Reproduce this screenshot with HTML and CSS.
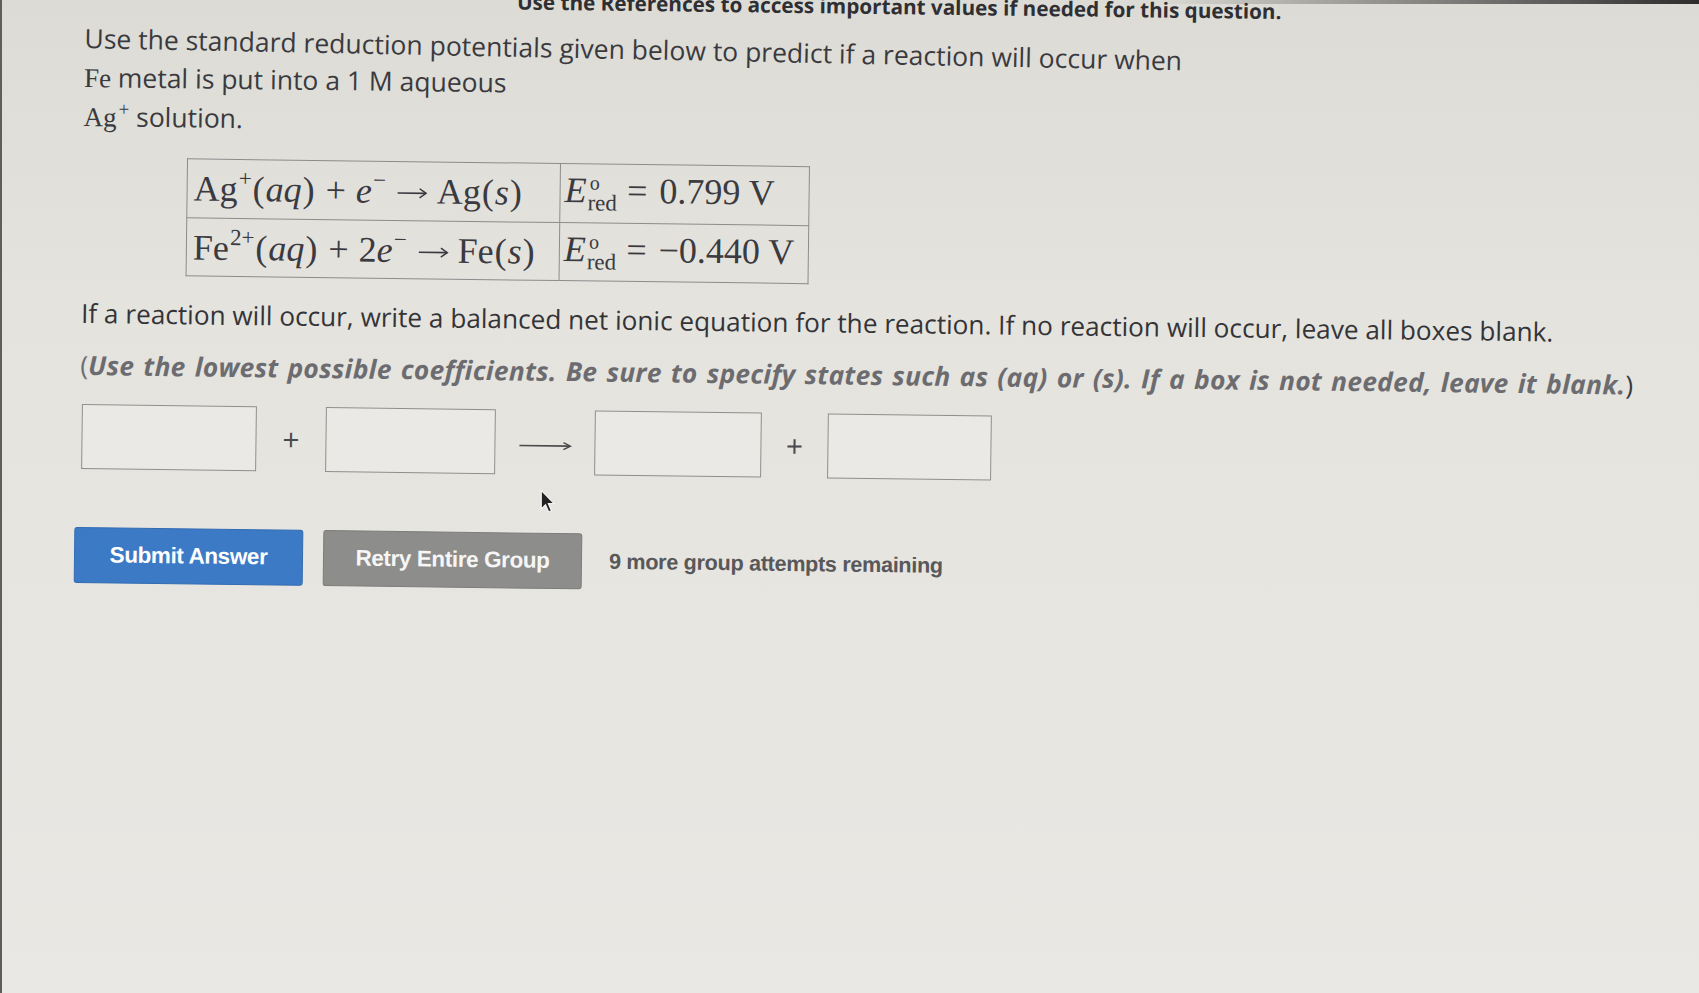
FILE: index.html
```html
<!DOCTYPE html>
<html lang="en">
<head>
<meta charset="utf-8">
<title>Standard reduction potentials</title>
<link rel="stylesheet" href="styles.css">
</head>
<body>
<div class="screen">
  <div class="refs">Use the References to access important values if needed for this question.</div>

  <div class="intro">
    <div class="line first">Use the standard reduction potentials given below to predict if a reaction will occur when</div>
    <div class="line"><span class="mj">Fe</span> metal is put into a 1 M aqueous</div>
    <div class="line"><span class="mj">Ag<sup>+</sup></span> solution.</div>
  </div>

  <table class="pot">
    <tr class="r1">
      <td class="c1">Ag<sup>+</sup><span class="pa">(</span><i>aq</i><span class="pa">)</span><span class="op">+</span><i>e</i><sup>−</sup><span class="op ar"><svg width="31" height="14" viewBox="0 0 31 14"><path d="M1 7 H29" stroke="#3a3a40" stroke-width="1.6" fill="none"/><path d="M23 2.5 L29.5 7 L23 11.5" stroke="#3a3a40" stroke-width="1.5" fill="none"/></svg></span>Ag<span class="pa">(</span><i>s</i><span class="pa">)</span></td>
      <td class="c2"><i>E</i><span class="ss"><span class="o">o</span><span class="r">red</span></span><span class="op eq">=</span>0.799 V</td>
    </tr>
    <tr class="r2">
      <td class="c1">Fe<sup>2+</sup><span class="pa">(</span><i>aq</i><span class="pa">)</span><span class="op">+</span>2<i>e</i><sup>−</sup><span class="op ar"><svg width="31" height="14" viewBox="0 0 31 14"><path d="M1 7 H29" stroke="#3a3a40" stroke-width="1.6" fill="none"/><path d="M23 2.5 L29.5 7 L23 11.5" stroke="#3a3a40" stroke-width="1.5" fill="none"/></svg></span>Fe<span class="pa">(</span><i>s</i><span class="pa">)</span></td>
      <td class="c2"><i>E</i><span class="ss"><span class="o">o</span><span class="r">red</span></span><span class="op eq">=</span>−0.440 V</td>
    </tr>
  </table>

  <p class="instr">If a reaction will occur, write a balanced net ionic equation for the reaction. If no reaction will occur, leave all boxes blank.</p>
  <p class="note"><span class="par">(</span><b><i>Use the lowest possible coefficients. Be sure to specify states such as (aq) or (s). If a box is not needed, leave it blank.</i></b><span class="par end">)</span></p>

  <div class="answer">
    <div class="box b1"></div>
    <div class="opw plus p1">+</div>
    <div class="box b2"></div>
    <div class="opw arrow">
      <svg width="54" height="14" viewBox="0 0 54 14"><path d="M1 7 H51" stroke="#4a4a4a" stroke-width="1.6" fill="none"/><path d="M45 3.5 L52 7 L45 10.5" stroke="#4a4a4a" stroke-width="1.4" fill="none"/></svg>
    </div>
    <div class="box b3"></div>
    <div class="opw plus p2">+</div>
    <div class="box b4"></div>
  </div>

  <div class="actions">
    <button class="btn submit">Submit Answer</button>
    <button class="btn retry">Retry Entire Group</button>
    <span class="remain">9 more group attempts remaining</span>
  </div>
</div>

<svg class="cursor" width="16" height="25" viewBox="0 0 13 20"><path d="M1 1 L1 16 L4.5 12.6 L7 18.5 L9.3 17.5 L6.8 11.7 L11.5 11.7 Z" fill="#222" stroke="#f4f4f4" stroke-width="1"/></svg>
</body>
</html>
```

FILE: styles.css
```css
html, body {
  margin: 0;
  padding: 0;
}
body {
  width: 1699px;
  height: 993px;
  overflow: hidden;
  position: relative;
  background-color: #e5e4df;
  background-image:
    linear-gradient(to right, rgba(35,35,35,0) 68%, rgba(35,35,35,0.95) 100%),
    linear-gradient(to bottom, #dcdbd5 0%, #e4e3de 30%, #e9e8e4 100%);
  background-size: 100% 4px, 100% 100%;
  background-repeat: no-repeat;
  border-left: 2px solid #5e5e5c;
  box-sizing: border-box;
  font-family: "Open Sans", "Noto Sans", sans-serif;
  color: #333;
}
.screen {
  padding-left: 83px;
  padding-top: 1px;
  transform: rotate(0.72deg);
  transform-origin: 0 0;
}
.refs {
  margin-top: -17px;
  padding-left: 432px;
  font-weight: 700;
  font-size: 20.7px;
  line-height: 22px;
  color: #2f2f33;
  white-space: nowrap;
}
.intro {
  margin-top: 12px;
  font-size: 26.5px;
  line-height: 39px;
  color: #3a3a3e;
}
.line { white-space: nowrap; }
.line.first {
  transform: rotate(0.45deg);
  transform-origin: 0 50%;
}
.mj {
  font-family: "Liberation Serif", "DejaVu Serif", serif;
  font-size: 27px;
  line-height: 1;
}
.mj sup {
  font-size: 19px;
  line-height: 0;
  vertical-align: 11px;
  margin-left: 2px;
}
.pot {
  margin-top: 21px;
  margin-left: 104px;
  border-collapse: collapse;
  font-family: "Liberation Serif", "DejaVu Serif", serif;
  font-size: 36px;
  line-height: 1;
  color: #3a3a40;
}
.pot td {
  border: 1.6px solid #8c8c8c;
  padding: 0 2px 0 6px;
  white-space: nowrap;
  vertical-align: middle;
}
.pot .r1 td { height: 58px; }
.pot .r2 td { height: 57px; }
.pot td.c1 { width: 364px; }
.pot td.c2 { width: 242px; padding-left: 4px; }
.pot sup {
  font-size: 23px;
  line-height: 0;
  vertical-align: 15px;
  margin-left: 1px;
}
.pa { margin: 0 1px; }
.op { margin: 0 10px; }
.op.eq { margin: 0 12px 0 10px; }
.op.ar { margin: 0 9px 0 11px; }
.op.ar svg { vertical-align: 3px; }
.ss {
  display: inline-flex;
  flex-direction: column;
  vertical-align: 13px;
  line-height: 1;
  margin-left: 1px;
}
.ss .o {
  font-size: 20px;
  line-height: 20px;
  margin-left: 2px;
}
.ss .r {
  font-size: 23px;
  line-height: 22px;
}
.instr {
  margin: 21px 0 0 0;
  font-size: 26.2px;
  line-height: 34px;
  color: #343438;
  white-space: nowrap;
}
.note {
  margin: 18px 0 0 0;
  font-size: 26.3px;
  line-height: 34px;
  color: #6c6c70;
  white-space: nowrap;
}
.note b { font-weight: 700; letter-spacing: 0.3px; word-spacing: 2px; }
.par { color: #6c6c70; }
.par.end { color: #3a3a3e; }
.answer {
  margin: 22px 0 0 2px;
  display: flex;
  align-items: center;
}
.box {
  height: 63px;
  border: 1.6px solid #8e8e8e;
  background: #eae9e5;
  flex: none;
}
.b1 { width: 173px; }
.b2 { width: 168px; }
.b3 { width: 165px; }
.b4 { width: 162px; }
.opw {
  flex: none;
  display: flex;
  justify-content: center;
  align-items: center;
  font-size: 30px;
  color: #4a4a4e;
}
.p1 { width: 69px; }
.p2 { width: 66px; }
.arrow { width: 99px; padding-top: 6px; }
.actions {
  margin: 58px 0 0 -4px;
  display: flex;
  align-items: center;
}
.btn {
  font-family: "Liberation Sans", Arial, sans-serif;
  font-weight: 700;
  font-size: 22.5px;
  letter-spacing: -0.4px;
  color: #fff;
  border-radius: 3px;
  height: 56px;
  padding: 0;
  cursor: pointer;
}
.submit {
  width: 229px;
  background: #3c7ac6;
  border: 1px solid #336cb2;
}
.retry {
  width: 259px;
  margin-left: 20px;
  background: #8d8d8b;
  border: 1px solid #7c7c7a;
  color: #f6f6f6;
}
.remain {
  margin-left: 27px;
  font-family: "Liberation Sans", Arial, sans-serif;
  font-weight: 700;
  font-size: 21.6px;
  letter-spacing: -0.3px;
  color: #58585a;
}
.cursor {
  position: absolute;
  left: 538px;
  top: 489px;
}
```
